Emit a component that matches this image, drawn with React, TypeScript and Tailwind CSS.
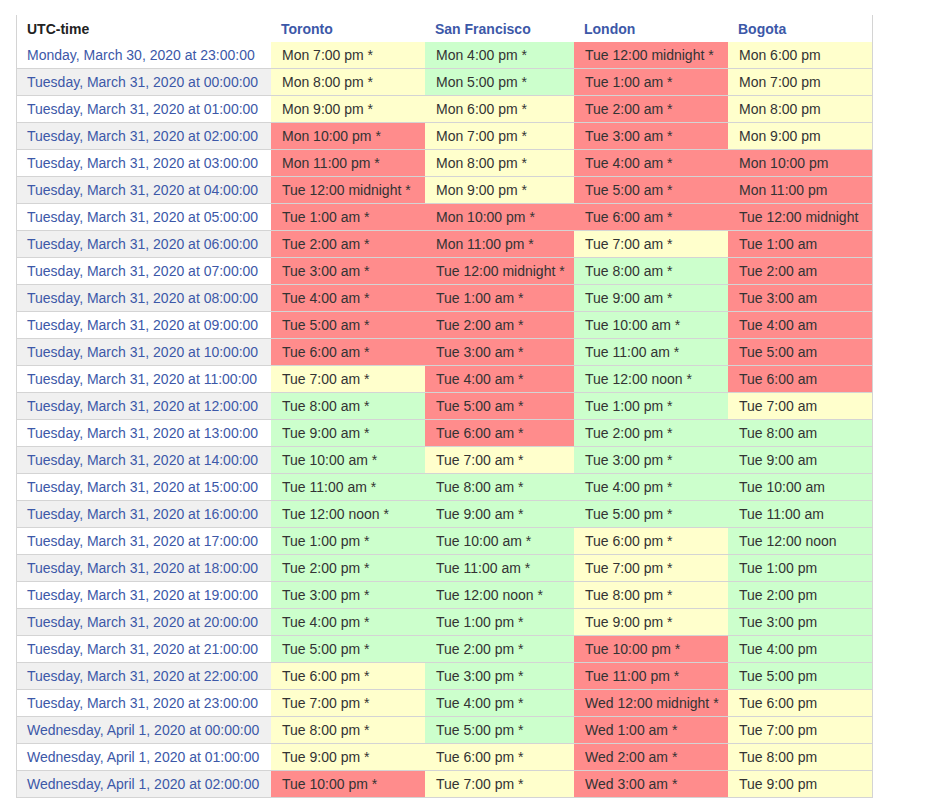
const cities = [
  { name: "Toronto", off: -4, star: true },
  { name: "San Francisco", off: -7, star: true },
  { name: "London", off: 1, star: true },
  { name: "Bogota", off: -5, star: false },
];
const shortDays = ["Sun", "Mon", "Tue", "Wed", "Thu", "Fri", "Sat"];

function fmtUtc(i: number) {
  const t = Date.UTC(2020, 2, 30, 23) + i * 3600000;
  const d = new Date(t);
  const day = ["Sunday", "Monday", "Tuesday", "Wednesday", "Thursday", "Friday", "Saturday"][d.getUTCDay()];
  const mon = ["January", "February", "March", "April"][d.getUTCMonth()];
  const h = String(d.getUTCHours()).padStart(2, "0");
  return `${day}, ${mon} ${d.getUTCDate()}, 2020 at ${h}:00:00`;
}

function local(i: number, off: number, star: boolean) {
  const d = new Date(Date.UTC(2020, 2, 30, 23) + (i + off) * 3600000);
  const h = d.getUTCHours();
  let s: string;
  if (h === 0) s = "12:00 midnight";
  else if (h === 12) s = "12:00 noon";
  else s = `${h % 12}:00 ${h < 12 ? "am" : "pm"}`;
  const cls =
    h >= 8 && h <= 17 ? "bg-[#ccffcc]" : h === 7 || (h >= 18 && h <= 21) ? "bg-[#ffffcc]" : "bg-[#ff8c8c]";
  return { text: `${shortDays[d.getUTCDay()]} ${s}${star ? " *" : ""}`, cls };
}

export default function App() {
  const rows = Array.from({ length: 28 }, (_, i) => i);
  return (
    <div className="w-[948px] h-[799px] overflow-hidden bg-white pt-[15px] pl-[16px] font-[Liberation_Sans] text-[14px] leading-[16px]">
      <div className="w-[857px] border-l border-r border-[#d4d4d4]">
        <div className="grid grid-cols-[254px_154px_149px_154px_144px] h-[27px] items-center font-bold">
          <div className="pl-[10px] text-[#222]">UTC-time</div>
          {cities.map((c) => (
            <div key={c.name} className="pl-[10px] text-[#3c58a8]">{c.name}</div>
          ))}
        </div>
        {rows.map((i) => (
          <div key={i} className="grid grid-cols-[254px_154px_149px_154px_144px] h-[27px] border-b border-[#d4d4d4]">
            <div className={`pl-[10px] flex items-center whitespace-nowrap overflow-hidden text-[#3c58a8] ${i % 2 ? "bg-[#f0f0f0]" : "bg-white"}`}>{fmtUtc(i)}</div>
            {cities.map((c) => {
              const l = local(i, c.off, c.star);
              return (
                <div key={c.name} className={`pl-[11px] flex items-center whitespace-nowrap overflow-hidden text-[#333] ${l.cls}`}>{l.text}</div>
              );
            })}
          </div>
        ))}
      </div>
    </div>
  );
}
